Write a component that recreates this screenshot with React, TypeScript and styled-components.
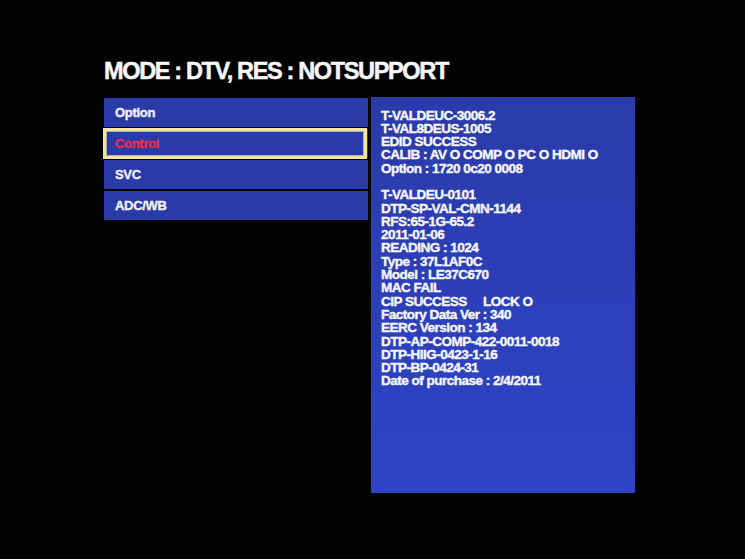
import React from "react";
import styled, { createGlobalStyle } from "styled-components";

const Global = createGlobalStyle`
  html, body { margin: 0; padding: 0; background: #000; }
  body { width: 745px; height: 559px; overflow: hidden; }
`;

const Screen = styled.div`
  width: 745px;
  height: 559px;
  background: #020203;
  box-sizing: border-box;
  padding: 58px 0 0 104px;
  font-family: "Liberation Sans", Arial, sans-serif;
  font-weight: bold;
  color: #f4f4f6;
`;

const Title = styled.h1`
  margin: 0;
  font-size: 23.5px;
  line-height: 27px;
  font-weight: bold;
  letter-spacing: -1.35px;
  color: #f6f6f8;
  white-space: nowrap;
  -webkit-text-stroke: 0.5px #f6f6f8;
`;

const Columns = styled.div`
  display: flex;
  gap: 3px;
  margin-top: 12px;
  align-items: flex-start;
`;

const Menu = styled.ul`
  list-style: none;
  margin: 1px 0 0;
  padding: 0;
  width: 264px;
  display: flex;
  flex-direction: column;
  gap: 2px;
`;

const MenuItem = styled.li<{ $selected?: boolean }>`
  position: relative;
  height: 29px;
  box-sizing: border-box;
  display: flex;
  align-items: center;
  padding-left: 11px;
  background: #2a3aa8;
  font-size: 13px;
  letter-spacing: -0.3px;
  color: ${(p) => (p.$selected ? "#ee2a45" : "#f2f2f6")};
  -webkit-text-stroke: 0.35px ${(p) => (p.$selected ? "#ee2a45" : "#f2f2f6")};
  ${(p) =>
    p.$selected &&
    `
    &::after {
      content: "";
      position: absolute;
      left: -1px;
      right: 1px;
      top: -1px;
      bottom: -1px;
      border: 3px solid #f3e59a;
      box-shadow: inset 0 0 0 1px rgba(255,250,220,0.6);
    }
  `}
`;

const Panel = styled.div`
  width: 264px;
  height: 396px;
  box-sizing: border-box;
  padding: 11.5px 0 0 10px;
  background: linear-gradient(180deg, #2a3ba9 0%, #2c40bc 60%, #2e44c6 100%);
`;

const InfoLine = styled.div`
  font-size: 13.5px;
  line-height: 13.3px;
  height: 13.3px;
  letter-spacing: -0.5px;
  white-space: pre;
  color: #f6f6f8;
  -webkit-text-stroke: 0.4px #f6f6f8;
`;

const menu = ["Option", "Control", "SVC", "ADC/WB"];

const info = [
  "T-VALDEUC-3006.2",
  "T-VAL8DEUS-1005",
  "EDID SUCCESS",
  "CALIB : AV O COMP O PC O HDMI O",
  "Option : 1720 0c20 0008",
  "",
  "T-VALDEU-0101",
  "DTP-SP-VAL-CMN-1144",
  "RFS:65-1G-65.2",
  "2011-01-06",
  "READING : 1024",
  "Type : 37L1AF0C",
  "Model : LE37C670",
  "MAC FAIL",
  "CIP SUCCESS     LOCK O",
  "Factory Data Ver : 340",
  "EERC Version : 134",
  "DTP-AP-COMP-422-0011-0018",
  "DTP-HIIG-0423-1-16",
  "DTP-BP-0424-31",
  "Date of purchase : 2/4/2011",
];

export default function App() {
  return (
    <>
      <Global />
      <Screen>
        <Title>MODE : DTV, RES : NOTSUPPORT</Title>
        <Columns>
          <Menu>
            {menu.map((m) => (
              <MenuItem key={m} $selected={m === "Control"}>
                {m}
              </MenuItem>
            ))}
          </Menu>
          <Panel>
            {info.map((line, i) => (
              <InfoLine key={i}>{line}</InfoLine>
            ))}
          </Panel>
        </Columns>
      </Screen>
    </>
  );
}
